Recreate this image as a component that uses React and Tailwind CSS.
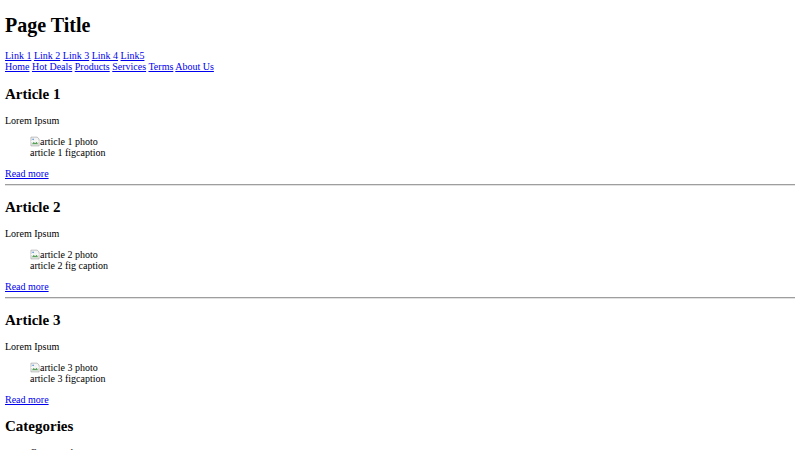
import React from "react";

function BrokenImg() {
  return (
    <svg width="10" height="11" viewBox="0 0 16 17" className="inline-block" style={{ verticalAlign: "-2px" }}>
      <path d="M1.5 1.5h10l3 3v11h-13z" fill="#f4f4f4" stroke="#9a9a9a" />
      <path d="M3 13l3-4 2 2 2-3 3 5z" fill="#5aa05a" />
      <circle cx="5" cy="5" r="1.5" fill="#6a9bd8" />
      <path d="M1 9l4 -2 3 3 4 -3 3 2" fill="none" stroke="#fff" strokeWidth="1.5" />
    </svg>
  );
}

const linkCls = "text-[#0000ee] underline";

function Article({ n, caption, last }) {
  return (
    <>
      <h2 className="text-[15px] font-bold my-[12.5px] leading-[normal]">Article {n}</h2>
      <p className="my-[10px] leading-[normal]">Lorem Ipsum</p>
      <figure className="my-[10px] mx-[25px] leading-[normal]">
        <div>
          <BrokenImg />
          article {n} photo
        </div>
        <figcaption>{caption}</figcaption>
      </figure>
      <a href="#" className={linkCls}>Read more</a>
      {!last && <hr className="my-[5px] border-0 border-t border-t-[#9e9e9e] border-b border-b-[#e2e2e2]" />}
    </>
  );
}

export default function App() {
  return (
    <div className="bg-white min-h-[450px] px-[5px] pt-[3px] text-black text-[10px] leading-[normal]" style={{ fontFamily: '"Liberation Serif", "Times New Roman", serif' }}>
      <h1 className="text-[20px] font-bold mt-[10.5px] mb-[13.5px] leading-[normal]">Page Title</h1>
      <nav className="pb-px">
        <div>
          <a href="#" className={linkCls}>Link 1</a>{" "}
          <a href="#" className={linkCls}>Link 2</a>{" "}
          <a href="#" className={linkCls}>Link 3</a>{" "}
          <a href="#" className={linkCls}>Link 4</a>{" "}
          <a href="#" className={linkCls}>Link5</a>
        </div>
        <div>
          <a href="#" className={linkCls}>Home</a>{" "}
          <a href="#" className={linkCls}>Hot Deals</a>{" "}
          <a href="#" className={linkCls}>Products</a>{" "}
          <a href="#" className={linkCls}>Services</a>{" "}
          <a href="#" className={linkCls}>Terms</a>{" "}
          <a href="#" className={linkCls}>About Us</a>
        </div>
      </nav>
      <Article n={1} caption="article 1 figcaption" />
      <Article n={2} caption="article 2 fig caption" />
      <Article n={3} caption="article 3 figcaption" last />
      <h2 className="text-[15px] font-bold my-[12.5px] leading-[normal]">Categories</h2>
      <ul className="list-disc pl-[25px] my-[10px]">
        <li>Category 1</li>
        <li>Category 2</li>
        <li>Category 3</li>
      </ul>
    </div>
  );
}
